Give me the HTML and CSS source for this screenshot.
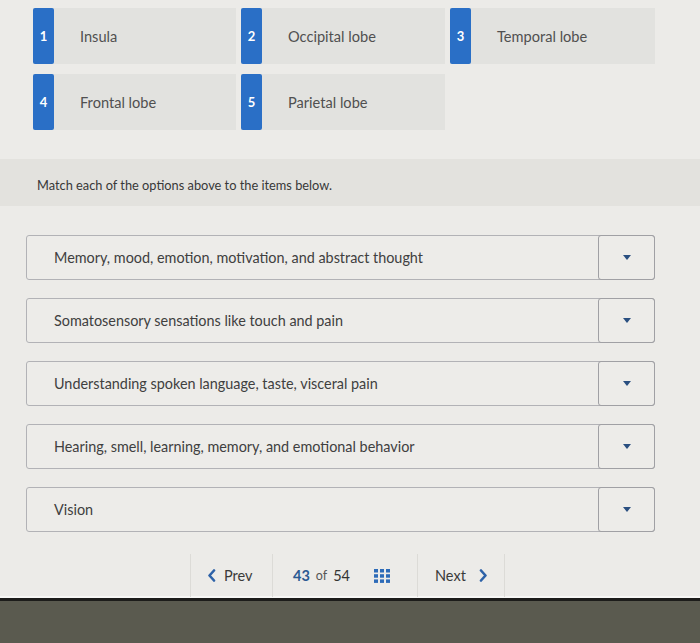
FILE: index.html
```html
<!DOCTYPE html>
<html>
<head>
<meta charset="utf-8">
<link rel="stylesheet" href="styles.css">
</head>
<body>
<div class="page">
  <div class="options">
    <div class="opt"><span class="badge">1</span><span class="label">Insula</span></div>
    <div class="opt"><span class="badge">2</span><span class="label">Occipital lobe</span></div>
    <div class="opt"><span class="badge">3</span><span class="label">Temporal lobe</span></div>
    <div class="opt"><span class="badge">4</span><span class="label">Frontal lobe</span></div>
    <div class="opt"><span class="badge">5</span><span class="label">Parietal lobe</span></div>
  </div>

  <div class="instruction">Match each of the options above to the items below.</div>

  <div class="items">
    <div class="item"><span class="item-text">Memory, mood, emotion, motivation, and abstract thought</span><span class="drop"><span class="tri"></span></span></div>
    <div class="item"><span class="item-text">Somatosensory sensations like touch and pain</span><span class="drop"><span class="tri"></span></span></div>
    <div class="item"><span class="item-text">Understanding spoken language, taste, visceral pain</span><span class="drop"><span class="tri"></span></span></div>
    <div class="item"><span class="item-text">Hearing, smell, learning, memory, and emotional behavior</span><span class="drop"><span class="tri"></span></span></div>
    <div class="item"><span class="item-text">Vision</span><span class="drop"><span class="tri"></span></span></div>
  </div>

  <div class="nav">
    <div class="nav-sec prev">
      <svg class="chev" width="9" height="13" viewBox="0 0 9 13"><path d="M7 1.5 L2.5 6.5 L7 11.5" fill="none" stroke="#2d62a8" stroke-width="2.6" stroke-linecap="round" stroke-linejoin="round"/></svg>
      <span>Prev</span>
    </div>
    <div class="nav-sec count">
      <span class="cur">43</span><span class="of">of</span><span class="tot">54</span>
      <svg class="grid" width="16" height="14" viewBox="0 0 16 14">
        <rect x="0" y="0" width="4" height="3.5" fill="#2d6bb8"/><rect x="6" y="0" width="4" height="3.5" fill="#2d6bb8"/><rect x="12" y="0" width="4" height="3.5" fill="#2d6bb8"/>
        <rect x="0" y="5.2" width="4" height="3.5" fill="#2d6bb8"/><rect x="6" y="5.2" width="4" height="3.5" fill="#2d6bb8"/><rect x="12" y="5.2" width="4" height="3.5" fill="#2d6bb8"/>
        <rect x="0" y="10.4" width="4" height="3.5" fill="#2d6bb8"/><rect x="6" y="10.4" width="4" height="3.5" fill="#2d6bb8"/><rect x="12" y="10.4" width="4" height="3.5" fill="#2d6bb8"/>
      </svg>
    </div>
    <div class="nav-sec next">
      <span>Next</span>
      <svg class="chev" width="9" height="13" viewBox="0 0 9 13"><path d="M2 1.5 L6.5 6.5 L2 11.5" fill="none" stroke="#2d62a8" stroke-width="2.6" stroke-linecap="round" stroke-linejoin="round"/></svg>
    </div>
  </div>
</div>
<div class="bezel"></div>
</body>
</html>
```

FILE: styles.css
```css
html, body {
  margin: 0;
  padding: 0;
}
body {
  background: #ecebe8;
  font-family: Lato, "Open Sans", "Liberation Sans", sans-serif;
  width: 700px;
  height: 643px;
  overflow: hidden;
}
.page {
  height: 598px;
  display: flex;
  flex-direction: column;
}
.options {
  display: grid;
  grid-template-columns: 203px 204px 205px;
  column-gap: 5px;
  row-gap: 10px;
  padding: 8px 0 0 33px;
}
.opt {
  display: flex;
  align-items: center;
  height: 56px;
  background: #e2e2df;
}
.badge {
  width: 21px;
  align-self: stretch;
  background: #2a6fc6;
  color: #fff;
  font-weight: 700;
  font-size: 13px;
  display: flex;
  align-items: center;
  justify-content: center;
  border-radius: 2px;
}
.label {
  margin-left: 26px;
  font-size: 14.6px;
  color: #505050;
}
.instruction {
  margin-top: 29px;
  height: 47px;
  background: #e3e2de;
  display: flex;
  align-items: center;
  padding-left: 37px;
  padding-top: 5px;
  box-sizing: border-box;
  font-size: 12.8px;
  color: #383838;
}
.items {
  display: flex;
  flex-direction: column;
  gap: 18px;
  padding: 29px 0 0 26px;
}
.item {
  width: 629px;
  height: 45px;
  box-sizing: border-box;
  border: 1px solid #b2b2b6;
  border-radius: 3px;
  display: flex;
  align-items: center;
  justify-content: space-between;
  background: #edece9;
}
.item-text {
  padding-left: 27px;
  font-size: 14.4px;
  color: #404040;
}
.drop {
  width: 57px;
  height: 45px;
  margin-right: -1px;
  box-sizing: border-box;
  border: 1px solid #a0a0a4;
  border-radius: 3px;
  display: flex;
  align-items: center;
  justify-content: center;
}
.tri {
  width: 0;
  height: 0;
  border-left: 4px solid transparent;
  border-right: 4px solid transparent;
  border-top: 5px solid #2a4f80;
}
.nav {
  margin-top: 22px;
  margin-left: 190px;
  display: flex;
  height: 43px;
}
.nav-sec {
  display: flex;
  align-items: center;
  border-left: 1px solid #dcdbd7;
  font-size: 14.5px;
  color: #3a3a3a;
}
.prev {
  width: 82px;
  padding-left: 16px;
  box-sizing: border-box;
  gap: 8px;
}
.count {
  width: 145px;
  padding-left: 20px;
  box-sizing: border-box;
}
.cur {
  font-weight: 700;
  color: #2b5a93;
}
.of {
  font-size: 12.5px;
  margin: 0 6px 0 6px;
  color: #555;
}
.tot {
  color: #333;
}
.grid {
  margin-left: 24px;
}
.next {
  width: 88px;
  padding-left: 17px;
  box-sizing: border-box;
  gap: 13px;
  border-right: 1px solid #dcdbd7;
}
.bezel {
  height: 45px;
  background: #5a5a4f;
  border-top: 3px solid #1c1c1a;
  box-shadow: 0 -2px 0 #f7f7f5;
}
```
